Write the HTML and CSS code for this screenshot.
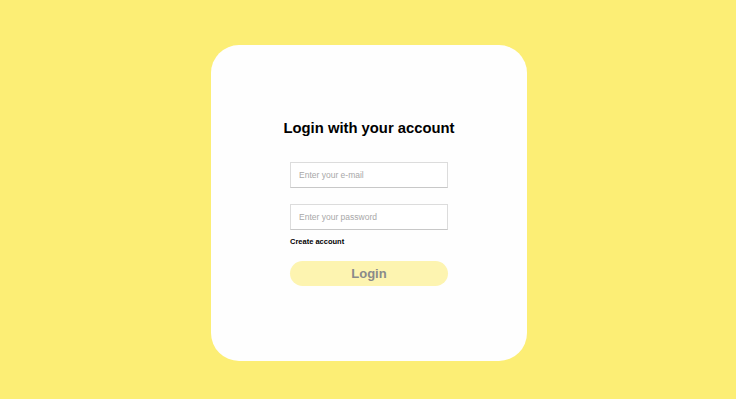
FILE: index.html
```html
<!DOCTYPE html>
<html lang="en">
<head>
    <meta charset="UTF-8">
    <title>Login</title>
    <meta name="viewport" content="width=device-width, initial-scale=1.0">
    <link rel="stylesheet" href="styles.css">
</head>
<body>
    <div class="login-card">
        <h1 class="login-title">Login with your account</h1>
        <form class="login-form">
            <input type="email" class="field" placeholder="Enter your e-mail">
            <input type="password" class="field" placeholder="Enter your password">
            <a href="#" class="create-link">Create account</a>
            <button type="button" class="login-btn">Login</button>
        </form>
    </div>
</body>
</html>
```

FILE: styles.css
```css
body {
    background-color: #fcee75;
    font-family: "Liberation Sans", Arial, sans-serif;
    margin: 0;
    height: 100vh;
    display: flex;
    align-items: flex-start;
    justify-content: center;
}

.login-card {
    box-sizing: border-box;
    width: 316px;
    height: 316px;
    margin: 45px 0 0 2px;
    padding-top: 74px;
    background: #fefefe;
    border-radius: 28px;
    display: flex;
    flex-direction: column;
    align-items: center;
}

.login-title {
    font-size: 14.8px;
    line-height: 18px;
    margin: 0 0 25px;
    color: #000;
}

.login-form {
    width: 158px;
    display: flex;
    flex-direction: column;
}

.field {
    box-sizing: border-box;
    height: 26px;
    width: 100%;
    border: 1px solid #dcdcdc;
    border-bottom-color: #c8c8c8;
    padding: 0 8px;
    font-family: inherit;
    font-size: 8.5px;
    margin: 0 0 16px;
    outline: none;
}

.field:last-of-type {
    margin-bottom: 7px;
}

.field::placeholder {
    color: #a8a8a8;
}

.create-link {
    font-size: 7.5px;
    font-weight: bold;
    color: #000;
    text-decoration: none;
    line-height: 10px;
    margin-bottom: 14px;
}

.login-btn {
    height: 25px;
    border: none;
    border-radius: 13px;
    background-color: #fdf4b0;
    color: #8a8a8a;
    font-family: inherit;
    font-size: 13px;
    font-weight: bold;
    cursor: pointer;
}
```
